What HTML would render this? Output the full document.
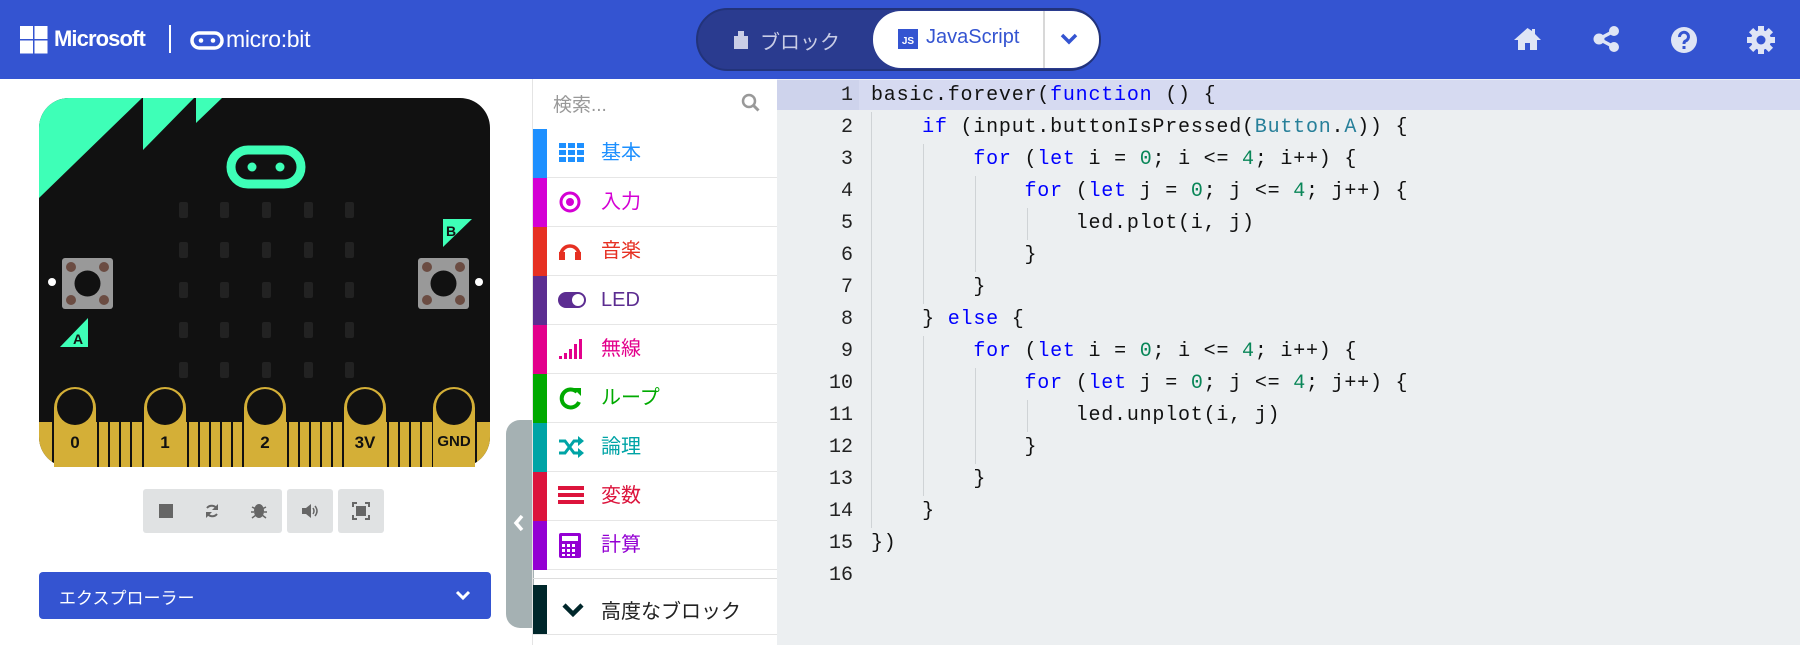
<!DOCTYPE html>
<html><head><meta charset="utf-8"><style>
*{margin:0;padding:0;box-sizing:border-box}
body{width:1800px;height:645px;overflow:hidden;position:relative;background:#fff;font-family:"Liberation Sans","Noto Sans CJK JP",sans-serif}
.a{position:absolute}
#hdr{left:0;top:0;width:1800px;height:79px;background:#3454D1}
.cat{position:absolute;left:533px;width:244px;height:49px;border-bottom:1px solid #e6e6e6}
.cat .s{position:absolute;left:0;top:0;width:14px;height:49px}
.cat .t{position:absolute;left:68px;top:11px;font-size:20px;line-height:26px}
.cat svg{position:absolute;left:25px;top:12px}
#code{left:777px;top:79px;width:1023px;height:566px;background:#ECEFF1}
.ln{position:absolute;left:777px;width:76px;text-align:right;font-family:"Liberation Mono",monospace;font-size:20px;color:#222;height:32px;line-height:32px}
.cl{position:absolute;left:871px;font-family:"Liberation Mono",monospace;font-size:20px;letter-spacing:0.79px;color:#111;height:32px;line-height:32px;white-space:pre}
.k{color:#0000FF}.n{color:#098658}.b{color:#267F99}
.g{position:absolute;width:1px;background:#cfd3d6}
.led{position:absolute;width:9px;height:16px;background:#222;border-radius:2px}
.pin{position:absolute;top:387px;width:42px;height:80px;background:#D4AF37;border-radius:21px 21px 0 0}
.pin i{position:absolute;left:3px;top:2px;width:36px;height:36px;border-radius:50%;background:#111}
.pin b{position:absolute;left:0;width:42px;top:46px;text-align:center;font-size:17px;color:#111}
</style></head><body>
<div id="hdr" class="a"></div>
<svg class="a" style="left:20px;top:26px" width="28" height="28"><rect x="0" y="0" width="13" height="13" fill="#fff"/><rect x="14.5" y="0" width="13" height="13" fill="#fff"/><rect x="0" y="14.5" width="13" height="13" fill="#fff"/><rect x="14.5" y="14.5" width="13" height="13" fill="#fff"/></svg>
<div class="a" style="left:54px;top:26px;color:#fff;font-size:22px;font-weight:bold;letter-spacing:-0.9px">Microsoft</div>
<div class="a" style="left:169px;top:25px;width:2px;height:28px;background:#fff"></div>
<svg class="a" style="left:190px;top:31px" width="34" height="19"><rect x="2" y="2" width="30" height="15" rx="7.5" fill="none" stroke="#fff" stroke-width="3.5"/><circle cx="11" cy="9.5" r="2.3" fill="#fff"/><circle cx="23" cy="9.5" r="2.3" fill="#fff"/></svg>
<div class="a" style="left:226px;top:26px;color:#fff;font-size:23px;letter-spacing:-0.3px">micro:bit</div>
<div class="a" style="left:696px;top:8px;width:405px;height:63px;border-radius:32px;background:#2A3B8F;border:2px solid #22337a"></div>
<div class="a" style="left:873px;top:11px;width:226px;height:57px;border-radius:28px;background:#fff"></div>
<div class="a" style="left:1043px;top:11px;width:2px;height:57px;background:#d8d8d8"></div>
<svg class="a" style="left:734px;top:29px" width="14" height="20"><path d="M4 2h6v5h4v13H0V7h4z" fill="#c9cde6"/></svg>
<div class="a" style="left:760px;top:26px;color:#c9cde6;font-size:20px">ブロック</div>
<div class="a" style="left:898px;top:29px;width:20px;height:20px;background:#3454D1;color:#fff;font-size:10px;font-weight:bold;line-height:26px;text-align:center">JS</div>
<div class="a" style="left:926px;top:26px;color:#3454D1;font-size:20px">JavaScript</div>
<svg class="a" style="left:1059px;top:32px" width="20" height="14"><path d="M3 3l7 7 7-7" fill="none" stroke="#3454D1" stroke-width="3.5"/></svg>
<svg class="a" style="left:1513px;top:27px" width="29" height="24"><path d="M14.5 1L1 13h4v10h7v-7h5v7h7V13h4L22 7V2h-3v2z" fill="#dfe5f5"/></svg>
<svg class="a" style="left:1593px;top:26px" width="28" height="26"><circle cx="21" cy="5" r="5" fill="#dfe5f5"/><circle cx="21" cy="21" r="5" fill="#dfe5f5"/><circle cx="6" cy="13" r="5.5" fill="#dfe5f5"/><path d="M6 13L21 5M6 13l15 8" stroke="#dfe5f5" stroke-width="3.5"/></svg>
<svg class="a" style="left:1670px;top:26px" width="28" height="28"><circle cx="14" cy="14" r="13" fill="#dfe5f5"/><path d="M9.5 11a4.5 4.5 0 1 1 6 4c-1.3.6-1.5 1.3-1.5 3" fill="none" stroke="#3454D1" stroke-width="3"/><rect x="12.5" y="20" width="3" height="3" fill="#3454D1"/></svg>
<svg class="a" style="left:1747px;top:26px" width="28" height="28" viewBox="0 0 28 28"><g fill="#dfe5f5"><circle cx="14" cy="14" r="10"/><rect x="11" y="0" width="6" height="28"/><rect x="0" y="11" width="28" height="6"/><rect x="11" y="0" width="6" height="28" transform="rotate(45 14 14)"/><rect x="11" y="0" width="6" height="28" transform="rotate(-45 14 14)"/></g><circle cx="14" cy="14" r="4.5" fill="#3454D1"/></svg>

<div class="a" style="left:39px;top:98px;width:451px;height:369px;background:#111;border-radius:30px;overflow:hidden">
<svg class="a" style="left:0;top:0" width="451" height="369"><path d="M0 0h103L0 100z" fill="#3EFFB7"/><path d="M104 0l0 52 51-52z" fill="#3EFFB7"/><path d="M157 0v25l26-25z" fill="#3EFFB7"/>
<path d="M404 121h29l-29 28z" fill="#3EFFB7"/><text x="407" y="138" font-size="14" font-weight="bold" font-family="Liberation Sans" fill="#111">B</text>
<path d="M49 220v29h-28z" fill="#3EFFB7"/><text x="34" y="246" font-size="14" font-weight="bold" font-family="Liberation Sans" fill="#111">A</text>
<rect x="0" y="324" width="451" height="45" fill="#D4AF37"/>
<g stroke="#111" stroke-width="2"><path d="M14 324v45M59 324v45M70 324v45M81 324v45M92 324v45M104 324v45M149 324v45M160 324v45M171 324v45M182 324v45M193 324v45M204 324v45M249 324v45M260 324v45M271 324v45M282 324v45M293 324v45M304 324v45M338 324v45M349 324v45M360 324v45M371 324v45M382 324v45M394 324v45M437 324v45"/></g>
</svg>
</div>
<div class="pin" style="left:54px"><i></i><b>0</b></div>
<div class="pin" style="left:144px"><i></i><b>1</b></div>
<div class="pin" style="left:244px"><i></i><b>2</b></div>
<div class="pin" style="left:344px"><i></i><b>3V</b></div>
<div class="pin" style="left:433px"><i></i><b style="font-size:15px">GND</b></div>
<svg class="a" style="left:226px;top:145px" width="80" height="44"><rect x="5" y="5" width="70" height="34" rx="17" fill="none" stroke="#3EFFB7" stroke-width="9"/><circle cx="26" cy="22" r="4.5" fill="#3EFFB7"/><circle cx="54" cy="22" r="4.5" fill="#3EFFB7"/></svg>
<div class="led" style="left:179px;top:202px"></div><div class="led" style="left:220px;top:202px"></div><div class="led" style="left:262px;top:202px"></div><div class="led" style="left:304px;top:202px"></div><div class="led" style="left:345px;top:202px"></div>
<div class="led" style="left:179px;top:242px"></div><div class="led" style="left:220px;top:242px"></div><div class="led" style="left:262px;top:242px"></div><div class="led" style="left:304px;top:242px"></div><div class="led" style="left:345px;top:242px"></div>
<div class="led" style="left:179px;top:282px"></div><div class="led" style="left:220px;top:282px"></div><div class="led" style="left:262px;top:282px"></div><div class="led" style="left:304px;top:282px"></div><div class="led" style="left:345px;top:282px"></div>
<div class="led" style="left:179px;top:322px"></div><div class="led" style="left:220px;top:322px"></div><div class="led" style="left:262px;top:322px"></div><div class="led" style="left:304px;top:322px"></div><div class="led" style="left:345px;top:322px"></div>
<div class="led" style="left:179px;top:362px"></div><div class="led" style="left:220px;top:362px"></div><div class="led" style="left:262px;top:362px"></div><div class="led" style="left:304px;top:362px"></div><div class="led" style="left:345px;top:362px"></div>
<svg class="a" style="left:62px;top:258px" width="51" height="51"><rect width="51" height="51" rx="3" fill="#999"/><circle cx="25.5" cy="25.5" r="13" fill="#111"/><g fill="#6b4c42"><circle cx="9" cy="9" r="5"/><circle cx="42" cy="9" r="5"/><circle cx="9" cy="42" r="5"/><circle cx="42" cy="42" r="5"/></g></svg>
<svg class="a" style="left:418px;top:258px" width="51" height="51"><rect width="51" height="51" rx="3" fill="#999"/><circle cx="25.5" cy="25.5" r="13" fill="#111"/><g fill="#6b4c42"><circle cx="9" cy="9" r="5"/><circle cx="42" cy="9" r="5"/><circle cx="9" cy="42" r="5"/><circle cx="42" cy="42" r="5"/></g></svg>
<div class="a" style="left:48px;top:278px;width:8px;height:8px;border-radius:50%;background:#fff"></div>
<div class="a" style="left:475px;top:278px;width:8px;height:8px;border-radius:50%;background:#fff"></div>
<div class="a" style="left:143px;top:489px;width:139px;height:44px;background:#E0E2E3;border-radius:3px"></div>
<div class="a" style="left:287px;top:489px;width:46px;height:44px;background:#E0E2E3;border-radius:3px"></div>
<div class="a" style="left:338px;top:489px;width:46px;height:44px;background:#E0E2E3;border-radius:3px"></div>
<div class="a" style="left:159px;top:504px;width:14px;height:14px;background:#666"></div>
<svg class="a" style="left:204px;top:503px" width="16" height="16"><path d="M13 6A6 6 0 0 0 3 5M3 10a6 6 0 0 0 10 1" stroke="#666" stroke-width="2" fill="none"/><path d="M14 1v6H8zM2 15V9h6z" fill="#666"/></svg>
<svg class="a" style="left:251px;top:501px" width="16" height="18"><ellipse cx="8" cy="10" rx="5" ry="7" fill="#666"/><path d="M1 6l4 2M15 6l-4 2M0 11h3M16 11h-3M1 17l4-3M15 17l-4-3" stroke="#666" stroke-width="1.5"/></svg>
<svg class="a" style="left:300px;top:502px" width="20" height="18"><path d="M2 6h4l5-4v14l-5-4H2z" fill="#666"/><path d="M13 6q2 3 0 6M15 4q4 5 0 10" stroke="#666" fill="none" stroke-width="1.5"/></svg>
<svg class="a" style="left:352px;top:502px" width="18" height="18"><path d="M1 5V1h4M13 1h4v4M17 13v4h-4M5 17H1v-4" stroke="#666" fill="none" stroke-width="2"/><rect x="4" y="4" width="10" height="10" fill="#666"/></svg>
<div class="a" style="left:39px;top:572px;width:452px;height:47px;background:#3454D1;border-radius:4px"></div>
<div class="a" style="left:59px;top:584px;color:#fff;font-size:17px">エクスプローラー</div>
<svg class="a" style="left:455px;top:590px" width="16" height="12"><path d="M2 2l6 6 6-6" stroke="#fff" fill="none" stroke-width="3"/></svg>
<div class="a" style="left:506px;top:420px;width:28px;height:208px;background:#A5B1B3;border-radius:14px 0 0 14px"></div>
<svg class="a" style="left:512px;top:513px" width="14" height="20"><path d="M10 3l-6 7 6 7" stroke="#fff" fill="none" stroke-width="3.5"/></svg>
<div class="a" style="left:532px;top:79px;width:1px;height:566px;background:#e4e4e4"></div>
<div class="a" style="left:553px;top:90px;color:#999;font-size:19px">検索...</div>
<svg class="a" style="left:741px;top:93px" width="20" height="20"><circle cx="8" cy="8" r="6" stroke="#999" stroke-width="2.5" fill="none"/><path d="M12.5 12.5l5 5" stroke="#999" stroke-width="3"/></svg>
<div class="cat" style="top:129px"><div class="s" style="background:#1E90FF"></div><svg width="28" height="24"><g fill="#1E90FF"><rect x="1" y="2" width="7" height="5"/><rect x="10" y="2" width="7" height="5"/><rect x="19" y="2" width="7" height="5"/><rect x="1" y="9" width="7" height="5"/><rect x="10" y="9" width="7" height="5"/><rect x="19" y="9" width="7" height="5"/><rect x="1" y="16" width="7" height="5"/><rect x="10" y="16" width="7" height="5"/><rect x="19" y="16" width="7" height="5"/></g></svg><div class="t" style="color:#1E90FF">基本</div></div>
<div class="cat" style="top:178px"><div class="s" style="background:#D400D4"></div><svg width="28" height="24"><circle cx="12" cy="12" r="9" stroke="#D400D4" stroke-width="3" fill="none"/><circle cx="12" cy="12" r="4" fill="#D400D4"/></svg><div class="t" style="color:#D400D4">入力</div></div>
<div class="cat" style="top:227px"><div class="s" style="background:#E63022"></div><svg width="28" height="24"><path d="M3 16a9 9 0 0 1 18 0" stroke="#E63022" stroke-width="3.5" fill="none"/><rect x="1" y="13" width="6" height="8" fill="#E63022"/><rect x="17" y="13" width="6" height="8" fill="#E63022"/></svg><div class="t" style="color:#E63022">音楽</div></div>
<div class="cat" style="top:276px"><div class="s" style="background:#5C2D91"></div><svg width="30" height="24"><rect x="0" y="4" width="28" height="16" rx="8" fill="#5C2D91"/><circle cx="20" cy="12" r="6" fill="#fff"/></svg><div class="t" style="color:#5C2D91">LED</div></div>
<div class="cat" style="top:325px"><div class="s" style="background:#E3008C"></div><svg width="28" height="24"><g fill="#E3008C"><rect x="1" y="19" width="3" height="3"/><rect x="6" y="16" width="3" height="6"/><rect x="11" y="12" width="3" height="10"/><rect x="16" y="7" width="3" height="15"/><rect x="21" y="2" width="3" height="20"/></g></svg><div class="t" style="color:#E3008C">無線</div></div>
<div class="cat" style="top:374px"><div class="s" style="background:#00AA00"></div><svg width="28" height="24"><path d="M19 6a9 9 0 1 0 2 10" stroke="#00AA00" stroke-width="4" fill="none"/><path d="M15 2h8v8z" fill="#00AA00"/></svg><div class="t" style="color:#00AA00">ループ</div></div>
<div class="cat" style="top:423px"><div class="s" style="background:#00A4A6"></div><svg width="28" height="24"><path d="M1 6h6l9 12h5M1 18h6l9-12h5" stroke="#00A4A6" stroke-width="3" fill="none"/><path d="M20 1l6 5-6 5zM20 13l6 5-6 5z" fill="#00A4A6"/></svg><div class="t" style="color:#00A4A6">論理</div></div>
<div class="cat" style="top:472px"><div class="s" style="background:#DC143C"></div><svg width="28" height="24"><g fill="#DC143C"><rect x="0" y="2" width="26" height="4"/><rect x="0" y="9" width="26" height="4"/><rect x="0" y="16" width="26" height="4"/></g></svg><div class="t" style="color:#DC143C">変数</div></div>
<div class="cat" style="top:521px"><div class="s" style="background:#9400D3"></div><svg width="28" height="26"><rect x="1" y="0" width="22" height="25" rx="2" fill="#9400D3"/><rect x="4" y="3" width="16" height="5" fill="#fff"/><g fill="#fff"><rect x="4" y="11" width="3" height="3"/><rect x="9" y="11" width="3" height="3"/><rect x="14" y="11" width="3" height="3"/><rect x="4" y="16" width="3" height="3"/><rect x="9" y="16" width="3" height="3"/><rect x="14" y="16" width="3" height="3"/><rect x="4" y="21" width="3" height="2"/><rect x="9" y="21" width="3" height="2"/><rect x="14" y="21" width="3" height="2"/></g></svg><div class="t" style="color:#9400D3">計算</div></div>
<div class="a" style="left:533px;top:578px;width:244px;height:1px;background:#ddd"></div>
<div class="a" style="left:533px;top:585px;width:14px;height:49px;background:#00272B"></div>
<svg class="a" style="left:561px;top:602px" width="24" height="16"><path d="M3 3l9 9 9-9" stroke="#00272B" stroke-width="4.5" fill="none"/></svg>
<div class="a" style="left:601px;top:595px;font-size:20px;color:#222">高度なブロック</div>
<div class="a" style="left:533px;top:634px;width:244px;height:1px;background:#e4e4e4"></div>
<div id="code" class="a"></div>
<div class="a" style="left:777px;top:80px;width:1023px;height:30px;background:#D6DAF1"></div>
<div class="a" style="left:777px;top:80px;width:82px;height:30px;background:#CED3EC"></div>
<div class="g" style="left:871px;top:112px;height:416px"></div>
<div class="g" style="left:923px;top:144px;height:160px"></div>
<div class="g" style="left:923px;top:336px;height:160px"></div>
<div class="g" style="left:975px;top:176px;height:96px"></div>
<div class="g" style="left:975px;top:368px;height:96px"></div>
<div class="g" style="left:1027px;top:208px;height:32px"></div>
<div class="g" style="left:1027px;top:400px;height:32px"></div>
<div class="ln" style="top:80px">1</div><div class="ln" style="top:112px">2</div><div class="ln" style="top:144px">3</div><div class="ln" style="top:176px">4</div><div class="ln" style="top:208px">5</div><div class="ln" style="top:240px">6</div><div class="ln" style="top:272px">7</div><div class="ln" style="top:304px">8</div><div class="ln" style="top:336px">9</div><div class="ln" style="top:368px">10</div><div class="ln" style="top:400px">11</div><div class="ln" style="top:432px">12</div><div class="ln" style="top:464px">13</div><div class="ln" style="top:496px">14</div><div class="ln" style="top:528px">15</div><div class="ln" style="top:560px">16</div>
<div class="cl" style="top:80px">basic.forever(<span class="k">function</span> () {</div>
<div class="cl" style="top:112px">    <span class="k">if</span> (input.buttonIsPressed(<span class="b">Button</span>.<span class="b">A</span>)) {</div>
<div class="cl" style="top:144px">        <span class="k">for</span> (<span class="k">let</span> i = <span class="n">0</span>; i &lt;= <span class="n">4</span>; i++) {</div>
<div class="cl" style="top:176px">            <span class="k">for</span> (<span class="k">let</span> j = <span class="n">0</span>; j &lt;= <span class="n">4</span>; j++) {</div>
<div class="cl" style="top:208px">                led.plot(i, j)</div>
<div class="cl" style="top:240px">            }</div>
<div class="cl" style="top:272px">        }</div>
<div class="cl" style="top:304px">    } <span class="k">else</span> {</div>
<div class="cl" style="top:336px">        <span class="k">for</span> (<span class="k">let</span> i = <span class="n">0</span>; i &lt;= <span class="n">4</span>; i++) {</div>
<div class="cl" style="top:368px">            <span class="k">for</span> (<span class="k">let</span> j = <span class="n">0</span>; j &lt;= <span class="n">4</span>; j++) {</div>
<div class="cl" style="top:400px">                led.unplot(i, j)</div>
<div class="cl" style="top:432px">            }</div>
<div class="cl" style="top:464px">        }</div>
<div class="cl" style="top:496px">    }</div>
<div class="cl" style="top:528px">})</div>
</body></html>
